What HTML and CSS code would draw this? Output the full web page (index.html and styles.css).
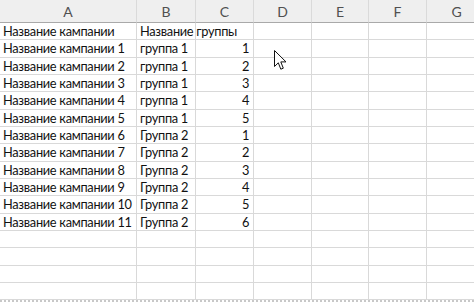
FILE: index.html
```html
<!DOCTYPE html>
<html lang="ru">
<head>
<meta charset="utf-8">
<title>Лист1</title>
<link rel="stylesheet" href="styles.css">
</head>
<body>
<div class="sheet">
  <div class="grid">
    <div class="hd">A</div><div class="hd">B</div><div class="hd">C</div><div class="hd">D</div><div class="hd">E</div><div class="hd">F</div><div class="hd">G</div>

    <div class="c">Название кампании</div><div class="c">Название группы</div><div class="c"></div><div class="c"></div><div class="c"></div><div class="c"></div><div class="c"></div>
    <div class="c">Название кампании 1</div><div class="c">группа 1</div><div class="c n">1</div><div class="c"></div><div class="c"></div><div class="c"></div><div class="c"></div>
    <div class="c">Название кампании 2</div><div class="c">группа 1</div><div class="c n">2</div><div class="c"></div><div class="c"></div><div class="c"></div><div class="c"></div>
    <div class="c">Название кампании 3</div><div class="c">группа 1</div><div class="c n">3</div><div class="c"></div><div class="c"></div><div class="c"></div><div class="c"></div>
    <div class="c">Название кампании 4</div><div class="c">группа 1</div><div class="c n">4</div><div class="c"></div><div class="c"></div><div class="c"></div><div class="c"></div>
    <div class="c">Название кампании 5</div><div class="c">группа 1</div><div class="c n">5</div><div class="c"></div><div class="c"></div><div class="c"></div><div class="c"></div>
    <div class="c">Название кампании 6</div><div class="c">Группа 2</div><div class="c n">1</div><div class="c"></div><div class="c"></div><div class="c"></div><div class="c"></div>
    <div class="c">Название кампании 7</div><div class="c">Группа 2</div><div class="c n">2</div><div class="c"></div><div class="c"></div><div class="c"></div><div class="c"></div>
    <div class="c">Название кампании 8</div><div class="c">Группа 2</div><div class="c n">3</div><div class="c"></div><div class="c"></div><div class="c"></div><div class="c"></div>
    <div class="c">Название кампании 9</div><div class="c">Группа 2</div><div class="c n">4</div><div class="c"></div><div class="c"></div><div class="c"></div><div class="c"></div>
    <div class="c">Название кампании 10</div><div class="c">Группа 2</div><div class="c n">5</div><div class="c"></div><div class="c"></div><div class="c"></div><div class="c"></div>
    <div class="c">Название кампании 11</div><div class="c">Группа 2</div><div class="c n">6</div><div class="c"></div><div class="c"></div><div class="c"></div><div class="c"></div>
    <div class="c"></div><div class="c"></div><div class="c"></div><div class="c"></div><div class="c"></div><div class="c"></div><div class="c"></div>
    <div class="c"></div><div class="c"></div><div class="c"></div><div class="c"></div><div class="c"></div><div class="c"></div><div class="c"></div>
    <div class="c"></div><div class="c"></div><div class="c"></div><div class="c"></div><div class="c"></div><div class="c"></div><div class="c"></div>
    <div class="c"></div><div class="c"></div><div class="c"></div><div class="c"></div><div class="c"></div><div class="c"></div><div class="c"></div>
    <div class="c"></div><div class="c"></div><div class="c"></div><div class="c"></div><div class="c"></div><div class="c"></div><div class="c"></div>
  </div>
  <svg class="pointer" width="13" height="21" viewBox="0 0 13 21" aria-hidden="true">
    <path d="M0.5 0.5 L0.5 16.5 L4.3 12.8 L6.8 19.2 L9.3 18.2 L6.8 11.9 L12 11.9 Z" fill="#fff" stroke="#111" stroke-width="1" stroke-linejoin="miter"/>
  </svg>
</div>
</body>
</html>
```

FILE: styles.css
```css
html, body {
  margin: 0;
  padding: 0;
  background: #fff;
}

.sheet {
  position: relative;
  width: 474px;
  height: 302px;
  overflow: hidden;
  border-bottom: 2px dotted #c8c8c8;
  box-sizing: border-box;
}

.grid {
  display: grid;
  grid-template-columns: 137px 59px 58px 58px 57px 58px 60px;
  grid-template-rows: 23px repeat(17, 17.33px);
  font-family: "Lato", "Open Sans", sans-serif;
  font-size: 12.8px;
  letter-spacing: -0.3px;
  color: #111;
}

.hd {
  background: #efefef;
  border-right: 1px solid #dadada;
  border-bottom: 1px solid #a9a9a9;
  color: #505050;
  font-size: 14px;
  letter-spacing: 0;
  display: flex;
  align-items: center;
  justify-content: center;
  box-sizing: border-box;
}

.c {
  border-right: 1px solid #d9d9d9;
  border-bottom: 1px solid #d9d9d9;
  box-sizing: border-box;
  padding: 0 3px 0 3px;
  white-space: nowrap;
  overflow: visible;
  line-height: 16px;
  display: flex;
  align-items: center;
}

.n {
  justify-content: flex-end;
  padding-right: 4px;
}

.pointer {
  position: absolute;
  left: 274px;
  top: 50px;
}
```
